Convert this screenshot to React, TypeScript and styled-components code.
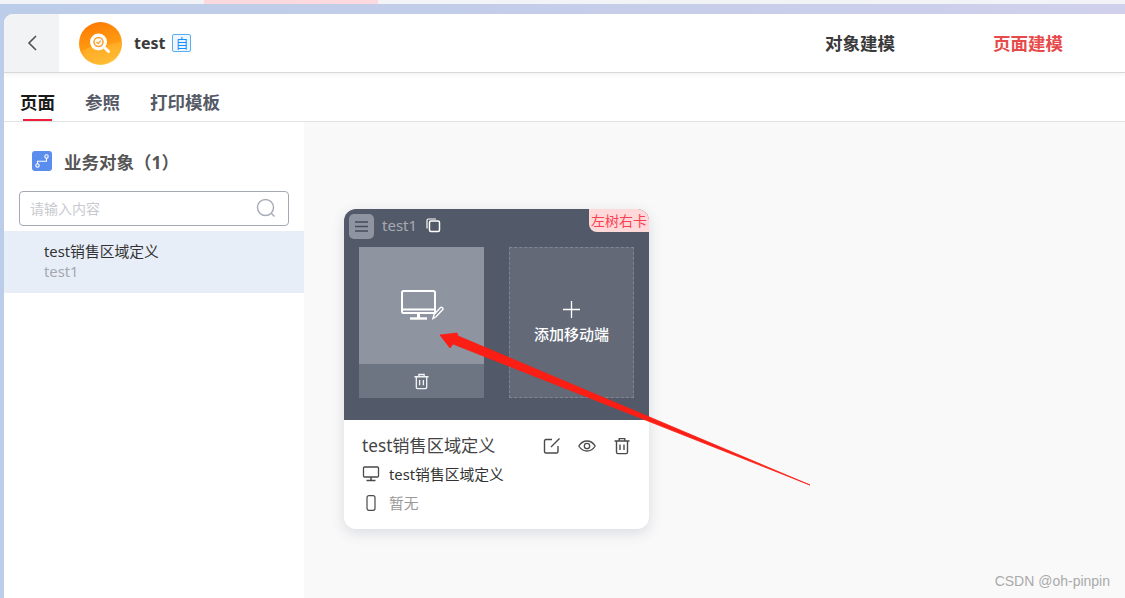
import * as React from "react";
import styled, { createGlobalStyle } from "styled-components";

const GlobalStyle = createGlobalStyle`
  html, body {
    margin: 0;
    padding: 0;
    height: 100%;
    overflow: hidden;
    font-family: "Noto Sans", "Noto Sans CJK SC", sans-serif;
  }
  * {
    box-sizing: border-box;
  }
`;

const Page = styled.div`
  position: relative;
  width: 1125px;
  height: 598px;
  overflow: hidden;
  display: flex;
  flex-direction: column;
  background: linear-gradient(90deg, #bccde9 0%, #c4cde9 50%, #d0d0ec 100%);
`;

const TopStrip = styled.div`
  height: 4px;
  flex: none;
  background: #f1f3f6;
  padding-left: 204px;
`;

const PinkEdge = styled.div`
  width: 174px;
  height: 4px;
  background: #fbd9dc;
`;

const Shell = styled.div`
  flex: 1;
  min-height: 0;
  margin: 10px 0 0 4px;
  display: flex;
  flex-direction: column;
  background: #fff;
  border-top-left-radius: 9px;
  overflow: hidden;
`;

const Header = styled.header`
  height: 59px;
  flex: none;
  display: flex;
  align-items: center;
  border-bottom: 1px solid #d8d8d8;
  box-shadow: 0 2px 4px rgba(0, 0, 0, 0.05);
  position: relative;
`;

const BackButton = styled.div`
  width: 55px;
  height: 58px;
  background: #f2f3f5;
  display: flex;
  align-items: center;
  justify-content: center;
  color: #555;
`;

const Logo = styled.div`
  width: 43px;
  height: 43px;
  margin-left: 20px;
  line-height: 0;
`;

const AppName = styled.div`
  margin-left: 12px;
  font-size: 16px;
  font-weight: 700;
  color: #3a3a3a;
`;

const AppTag = styled.span`
  margin-left: 7px;
  width: 19px;
  height: 18px;
  border: 1px solid #5aaef0;
  border-radius: 2px;
  background: #eef7fe;
  color: #1890ff;
  font-size: 13px;
  line-height: 16px;
  text-align: center;
`;

const HeaderNav = styled.nav`
  margin-left: auto;
  padding: 0 62px 2px 0;
  display: flex;
  gap: 98px;
`;

const NavItem = styled.div<{ $active?: boolean }>`
  font-size: 17.5px;
  font-weight: 700;
  color: ${(p) => (p.$active ? "#e64a4a" : "#3a3a3a")};
`;

const Tabs = styled.div`
  height: 49px;
  flex: none;
  display: flex;
  gap: 30px;
  padding-left: 16px;
  border-bottom: 1px solid #e2e2e2;
`;

const Tab = styled.div<{ $active?: boolean }>`
  position: relative;
  padding-top: 16px;
  font-size: 17.5px;
  line-height: 26px;
  font-weight: 700;
  color: ${(p) => (p.$active ? "#1a1a1a" : "#555a66")};

  ${(p) =>
    p.$active &&
    `
    &::after {
      content: "";
      position: absolute;
      left: 3px;
      right: 3px;
      bottom: 0;
      height: 2px;
      background: #f01f3a;
    }
  `}
`;

const Body = styled.div`
  flex: 1;
  min-height: 0;
  display: flex;
`;

const Sidebar = styled.aside`
  width: 300px;
  flex: none;
  background: #fff;
  padding-top: 29px;
`;

const SideTitle = styled.div`
  display: flex;
  align-items: center;
  gap: 12px;
  padding-left: 28px;
  height: 20px;
  font-size: 17.5px;
  font-weight: 700;
  color: #555;
`;

const TitleIcon = styled.div`
  width: 20px;
  height: 20px;
  border-radius: 3px;
  background: #5b8dee;
  line-height: 0;
`;

const SearchBox = styled.div`
  margin: 20px 15px 0;
  height: 35px;
  border: 1px solid #a3a8b4;
  border-radius: 4px;
  display: flex;
  align-items: center;
  justify-content: space-between;
  padding: 0 12px 2px 10px;
  font-size: 14px;
  color: #c8cacf;
`;

const ListRow = styled.div`
  margin-top: 5px;
  height: 62px;
  background: #e8eef8;
  padding: 10px 0 0 40px;
  font-size: 14.8px;
  line-height: 20px;
  color: #333;
`;

const ListSub = styled.div`
  color: #a5a8ae;
`;

const Main = styled.main`
  flex: 1;
  min-width: 0;
  background: #f9f9f9;
  padding: 87px 0 0 40px;
`;

const Card = styled.section`
  width: 305px;
  height: 320px;
  border-radius: 12px;
  background: #fff;
  box-shadow: 0 4px 14px rgba(60, 70, 100, 0.16);
  overflow: hidden;
  display: flex;
  flex-direction: column;
`;

const CardTop = styled.div`
  position: relative;
  height: 211px;
  flex: none;
  background: #525968;
  padding: 5px 15px 0 5px;
`;

const CardHead = styled.div`
  display: flex;
  align-items: center;
  height: 25px;
  color: #a6aab3;
  font-size: 15px;
  line-height: 23px;
`;

const HeadLabel = styled.span`
  margin-bottom: 2px;
`;

const MenuButton = styled.div`
  width: 25px;
  height: 25px;
  border-radius: 5px;
  background: #8e94a0;
  color: #464c59;
  display: flex;
  align-items: center;
  justify-content: center;
  margin-right: 8px;
`;

const CopyIcon = styled.span`
  margin: 0 0 2px 9px;
  line-height: 0;
  color: #fff;
`;

const CornerBadge = styled.div`
  position: absolute;
  top: 0;
  right: 0;
  width: 60px;
  height: 23px;
  background: #ffd9d9;
  border-bottom-left-radius: 8px;
  color: #fa3f52;
  font-size: 14px;
  line-height: 23px;
  text-align: center;
  white-space: nowrap;
`;

const Tiles = styled.div`
  display: flex;
  gap: 25px;
  margin: 8px 0 0 10px;
`;

const PcTile = styled.div`
  width: 125px;
  height: 151px;
  display: flex;
  flex-direction: column;
`;

const PcPreview = styled.div`
  height: 117px;
  background: #8e94a0;
  display: flex;
  align-items: center;
  justify-content: center;
  padding: 0 0 1px 2px;
  line-height: 0;
`;

const PcDelete = styled.div`
  flex: 1;
  background: #6e7582;
  color: #f2f3f5;
  display: flex;
  align-items: center;
  justify-content: center;
`;

const AddTile = styled.div`
  width: 125px;
  height: 151px;
  background: #636977;
  border: 1px dashed #7f8592;
  color: #fff;
  font-size: 15px;
  line-height: 22px;
  font-weight: 500;
  display: flex;
  flex-direction: column;
  align-items: center;
  padding-top: 53px;
`;

const PlusMark = styled.div`
  height: 17px;
  line-height: 0;
  margin-bottom: 5px;
`;

const CardInfo = styled.div`
  flex: 1;
  padding: 13px 18px 0;
`;

const InfoHead = styled.div`
  display: flex;
  align-items: center;
  justify-content: space-between;
  height: 26px;
  font-size: 17.2px;
  line-height: 24px;
  color: #444;
`;

const Actions = styled.div`
  display: flex;
  gap: 17px;
  color: #4a4a4a;
  line-height: 0;
`;

const InfoRow = styled.div<{ $muted?: boolean }>`
  display: flex;
  align-items: center;
  gap: 9px;
  height: 29px;
  font-size: 14.8px;
  line-height: 20px;
  padding-top: 1px;
  color: ${(p) => (p.$muted ? "#999" : "#333")};

  & > svg {
    flex: none;
    color: #4a4a4a;
  }
`;

const ArrowLayer = styled.svg`
  position: absolute;
  left: 0;
  top: 0;
  pointer-events: none;
`;

const Watermark = styled.div`
  position: absolute;
  right: 15px;
  bottom: 9px;
  font-family: "Liberation Sans", sans-serif;
  font-size: 14px;
  color: #aaa;
`;

function TrashIcon({ size = 18 }: { size?: number }) {
  return (
    <svg width={size} height={size} viewBox="0 0 18 18" fill="none" stroke="currentColor" strokeWidth="1.4">
      <path d="M1.5 4h15M6.2 4V1.6h5.6V4M3.5 4v11.2c0 .9.6 1.4 1.4 1.4h8.2c.8 0 1.4-.5 1.4-1.4V4M7 7.5v5.6M11 7.5v5.6" />
    </svg>
  );
}

export default function App() {
  return (
    <Page>
      <GlobalStyle />
      <TopStrip>
        <PinkEdge />
      </TopStrip>
      <Shell>
        <Header>
          <BackButton>
            <svg width="12" height="18" viewBox="0 0 12 18" fill="none" stroke="currentColor" strokeWidth="1.7">
              <path d="M10 2 3 9l7 7" />
            </svg>
          </BackButton>
          <Logo>
            <svg width="43" height="43" viewBox="0 0 43 43">
              <defs>
                <linearGradient id="logoFill" x1="0.3" y1="0" x2="0.6" y2="1">
                  <stop offset="0" stopColor="#ff7a00" />
                  <stop offset="0.55" stopColor="#ff9a12" />
                  <stop offset="1" stopColor="#ffc840" />
                </linearGradient>
              </defs>
              <circle cx="21.5" cy="21.5" r="21.5" fill="url(#logoFill)" />
              <path d="M3 29 13 24l7 6 12-8 10-2c-1 12-10 22-20.500 22C13 42 6 37 3 29Z" fill="#ffb52e" opacity="0.65" />
              <circle cx="19.500" cy="20" r="8.500" fill="#fff" />
              <circle cx="19.500" cy="20" r="4.500" fill="#fffaf0" stroke="#f7a030" strokeWidth="1.500" />
              <path d="m17.500 20 1.600 1.600 2.600-2.800" fill="none" stroke="#f7a030" strokeWidth="1.300" />
              <path d="m26 26 3.500 3.500" stroke="#fff" strokeWidth="3" strokeLinecap="round" />
            </svg>
          </Logo>
          <AppName>test</AppName>
          <AppTag>自</AppTag>
          <HeaderNav>
            <NavItem>对象建模</NavItem>
            <NavItem $active>页面建模</NavItem>
          </HeaderNav>
        </Header>
        <Tabs>
          <Tab $active>页面</Tab>
          <Tab>参照</Tab>
          <Tab>打印模板</Tab>
        </Tabs>
        <Body>
          <Sidebar>
            <SideTitle>
              <TitleIcon>
                <svg width="20" height="20" viewBox="0 0 20 20" fill="none" stroke="#fff" strokeWidth="1.100">
                  <circle cx="5.500" cy="14.500" r="1.700" />
                  <circle cx="14.500" cy="5.500" r="1.700" />
                  <path d="M5.500 12.800V10.200h9V7.200" />
                </svg>
              </TitleIcon>
              业务对象（1）
            </SideTitle>
            <SearchBox>
              请输入内容
              <svg width="20" height="20" viewBox="0 0 20 20" fill="none" stroke="#a8adb8" strokeWidth="1.500">
                <circle cx="9.500" cy="9.500" r="8" />
                <path d="m15.500 15.500 3 3" />
              </svg>
            </SearchBox>
            <ListRow>
              test销售区域定义
              <ListSub>test1</ListSub>
            </ListRow>
          </Sidebar>
          <Main>
            <Card>
              <CardTop>
                <CardHead>
                  <MenuButton>
                    <svg width="15" height="13" viewBox="0 0 15 13" stroke="currentColor" strokeWidth="1.400">
                      <path d="M1 2h13M1 6.500h13M1 11h13" />
                    </svg>
                  </MenuButton>
                  <HeadLabel>test1</HeadLabel>
                  <CopyIcon>
                    <svg width="15" height="15" viewBox="0 0 15 15" fill="none" stroke="currentColor" strokeWidth="1.500">
                      <rect x="3.500" y="3" width="10" height="10.500" rx="1.500" />
                      <path d="M1 10.500V2.500C1 1.500 1.500 1 2.500 1H10" strokeWidth="1.200" />
                    </svg>
                  </CopyIcon>
                </CardHead>
                <CornerBadge>左树右卡</CornerBadge>
                <Tiles>
                  <PcTile>
                    <PcPreview>
                      <svg width="44" height="30" viewBox="0 0 44 30" fill="none" stroke="#fff">
                        <rect x="1" y="1" width="33" height="22" rx="1.500" strokeWidth="2" />
                        <path d="M1 19.500h33" strokeWidth="2.200" />
                        <path d="M17.500 23v5" strokeWidth="3" />
                        <path d="M9 28.500h17" strokeWidth="2.400" />
                        <path d="m32 28.500 1-4 6.500-7c1-1 3.300 .9 2.300 2l-6.500 7Z" strokeWidth="1.400" />
                      </svg>
                    </PcPreview>
                    <PcDelete>
                      <TrashIcon size={17} />
                    </PcDelete>
                  </PcTile>
                  <AddTile>
                    <PlusMark>
                      <svg width="17" height="17" viewBox="0 0 17 17" stroke="#fff" strokeWidth="1.300">
                        <path d="M8.500 0v17M0 8.500h17" />
                      </svg>
                    </PlusMark>
                    添加移动端
                  </AddTile>
                </Tiles>
              </CardTop>
              <CardInfo>
                <InfoHead>
                  test销售区域定义
                  <Actions>
                    <svg width="18" height="18" viewBox="0 0 18 18" fill="none" stroke="currentColor" strokeWidth="1.400">
                      <path d="M9 2.500H3c-1 0-1.500.5-1.500 1.500v10.500c0 1 .5 1.500 1.500 1.500h10.500c1 0 1.500-.5 1.500-1.500V9M8 10l8.500-8.500" />
                    </svg>
                    <svg width="18" height="18" viewBox="0 0 18 18" fill="none" stroke="currentColor" strokeWidth="1.300">
                      <path d="M.8 9C3 5.500 5.800 4 9 4s6 1.500 8.200 5c-2.200 3.500-5 5-8.200 5S3 12.500.8 9Z" />
                      <circle cx="9" cy="9" r="2.700" />
                    </svg>
                    <TrashIcon />
                  </Actions>
                </InfoHead>
                <InfoRow>
                  <svg width="18" height="16" viewBox="0 0 18 16" fill="none" stroke="currentColor" strokeWidth="1.300">
                    <rect x="1.500" y="1" width="15" height="10" rx="1" />
                    <path d="M9 11v3" strokeWidth="1.500" />
                    <path d="M4.500 14.500h9" strokeWidth="1.500" />
                  </svg>
                  test销售区域定义
                </InfoRow>
                <InfoRow $muted>
                  <svg width="18" height="16" viewBox="0 0 18 16" fill="none" stroke="currentColor" strokeWidth="1.200">
                    <rect x="5" y="0.700" width="8" height="14.600" rx="2" />
                  </svg>
                  暂无
                </InfoRow>
              </CardInfo>
            </Card>
          </Main>
        </Body>
      </Shell>
      <ArrowLayer width="1125" height="598" viewBox="0 0 1125 598">
        <path d="M810 485 458 336 457 333 440 335 450 348 453 344Z" fill="#fa1e14" stroke="#fa1e14" strokeWidth="0.8" strokeLinejoin="round" />
      </ArrowLayer>
      <Watermark>CSDN @oh-pinpin</Watermark>
    </Page>
  );
}
